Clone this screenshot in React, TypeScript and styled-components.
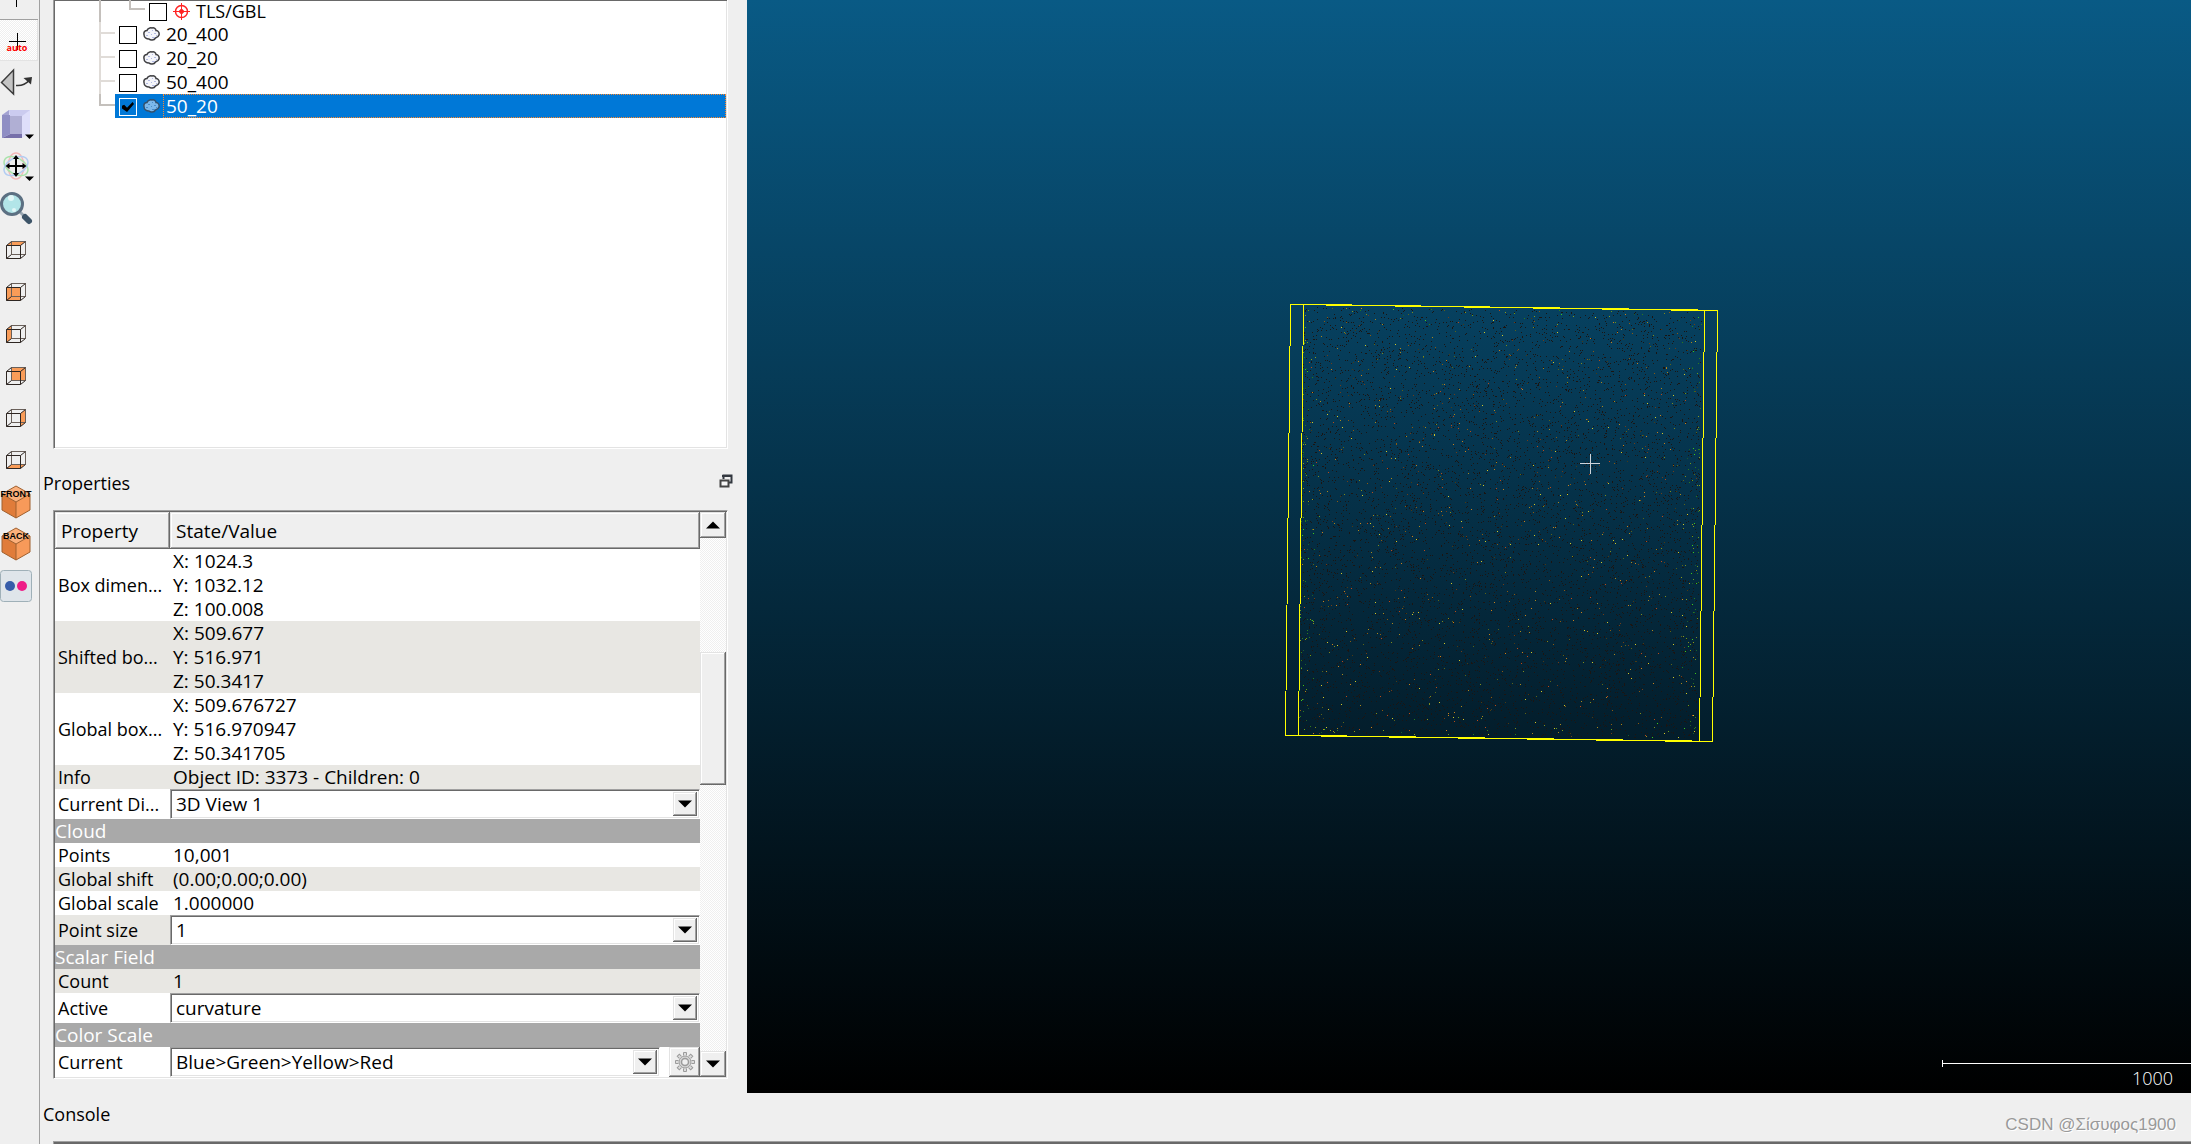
import React from 'react';
import styled, { createGlobalStyle, css } from 'styled-components';

const GlobalStyle = createGlobalStyle`
  *, *::before, *::after { box-sizing: border-box; }
  html, body { margin: 0; height: 100%; }
  body, button, select, input {
    font-family: 'Open Sans', 'Noto Sans', 'Noto Sans CJK SC', sans-serif;
    font-size: 19px;
    line-height: 24px;
    color: #000;
  }
  body { background: #efefef; }
`;

const raised = css`
  background: #efefef;
  box-shadow: inset -1px -1px #696969, inset 1px 1px #e3e3e3,
    inset -2px -2px #a0a0a0, inset 2px 2px #fff;
`;

const sunken = css`
  background: #fff;
  padding: 1px;
  border: 1px solid;
  border-color: #a0a0a0 #fff #fff #a0a0a0;
  box-shadow: inset 1px 1px #696969, inset -1px -1px #e3e3e3;
`;

const checker = css`
  background: conic-gradient(#fff 25%, #efefef 0 50%, #fff 0 75%, #efefef 0) 0 0 / 2px 2px;
`;

const Window = styled.div`
  display: flex;
  height: 100vh;
  overflow: hidden;
  background: #efefef;
`;

/* ---------- left toolbar ---------- */

const Toolbar = styled.nav`
  flex: none;
  width: 40px;
  border-right: 1px solid #a0a0a0;
  overflow: hidden;
`;

const ToolList = styled.div`
  display: flex;
  flex-direction: column;
  margin-top: -23px;
`;

const Tool = styled.button<{ $pressed?: boolean }>`
  flex: none;
  width: 38px;
  height: 42px;
  padding: 0;
  border: 0;
  background: none;
  ${(p) =>
    p.$pressed &&
    css`
      ${checker}
      box-shadow: inset 0 1px #a0a0a0, inset -1px -1px #e3e3e3;
    `}
  svg { display: block; }
`;

const Glyph = ({ children }: { children: React.ReactNode }) => (
  <svg width="38" height="42" viewBox="0 0 38 42" fill="none" aria-hidden="true">
    {children}
  </svg>
);

const Caret = () => <path d="M25 31.500h9l-4.500 4.500z" fill="#000" />;

const faces: Record<string, string> = {
  Top: 'M6.500 16.500L11.500 12.500H25.500L20.500 16.500Z',
  Front: 'M6.500 16.500H20.500V29.500H6.500Z',
  Left: 'M6.500 16.500L11.500 12.500V25.500L6.500 29.500Z',
  Back: 'M11.500 12.500H25.500V25.500H11.500Z',
  Right: 'M20.500 16.500L25.500 12.500V25.500L20.500 29.500Z',
  Bottom: 'M6.500 29.500L11.500 25.500H25.500L20.500 29.500Z',
};

const FaceCube = ({ face }: { face: string }) => (
  <Glyph>
    <path d={faces[face]} fill="#f99c58" />
    <g stroke="#2e2622" strokeWidth="1">
      <path d="M11.500 12.500H25.500V25.500H11.500Z" stroke="#6a605a" />
      <path d="M6.500 16.500H20.500V29.500H6.500Z" />
      <path d="M6.500 16.500l5-4M20.500 16.500l5-4M20.500 29.500l5-4M6.500 29.500l5-4" />
    </g>
  </Glyph>
);

const IsoCube = ({ word }: { word: string }) => (
  <Glyph>
    <path d="M16 5L30 13L16 21L2 13Z" fill="#fbb07c" />
    <path d="M2 13L16 21V37L2 29Z" fill="#e07c3a" />
    <path d="M30 13L16 21V37L30 29Z" fill="#f79a5a" />
    <path d="M16 5L30 13V29L16 37L2 29V13ZM2 13L16 21L30 13M16 21V37" stroke="#a0602e" />
    <text x="16" y="16" textAnchor="middle" fontFamily="'Liberation Sans', sans-serif" fontWeight="700" fontSize="9" fill="#000">
      {word}
    </text>
  </Glyph>
);

const AppToolbar = () => (
  <Toolbar aria-label="Display tools">
    <ToolList>
      <Tool aria-label="Pick rotation center">
        <Glyph><path d="M16.500 14V30M8 21.500H25" stroke="#000" /></Glyph>
      </Tool>
      <Tool aria-label="Auto-pick rotation center" $pressed>
        <Glyph>
          <path d="M17.500 14V31M9 22.500H26" stroke="#000" />
          <text x="17" y="32" textAnchor="middle" fontFamily="'Open Sans', sans-serif" fontWeight="700" fontSize="9" fill="#f00">auto</text>
        </Glyph>
      </Tool>
      <Tool aria-label="Flip">
        <Glyph>
          <path d="M1.500 21.500L13.500 9V33Z" fill="#c4c4c4" stroke="#3c3c3c" strokeWidth="1.500" />
          <path d="M16 24.500C21 25 26 23 29 19.500" stroke="#333" strokeWidth="1.500" />
          <path d="M23.500 17L32 16L31 23.500Z" fill="#333" />
        </Glyph>
      </Tool>
      <Tool aria-label="Set view">
        <Glyph>
          <path d="M2 12L9 7H30V30L22 35H2Z" fill="#dedefa" />
          <path d="M2 12L9 7V31L2 35Z" fill="#a3a2d2" />
          <path d="M9 7H30L22 13H10Z" fill="#cbcbef" />
          <path d="M10 13H22V31H10Z" fill="#b0afd4" />
          <path d="M2 35L10 31H22V35Z" fill="#7770aa" />
          <path d="M2 12H10V31L2 35Z" fill="#8f8ec4" />
          <Caret />
        </Glyph>
      </Tool>
      <Tool aria-label="Set pivot visibility">
        <Glyph>
          <ellipse cx="16" cy="21" rx="8" ry="13" stroke="#f3b9b9" strokeWidth="1.500" />
          <ellipse cx="16" cy="21" rx="8" ry="13" stroke="#a9e3ab" strokeWidth="1.500" transform="rotate(-60 16 21)" />
          <ellipse cx="16" cy="21" rx="8" ry="13" stroke="#b3cdf2" strokeWidth="1.500" transform="rotate(60 16 21)" />
          <path d="M16 13V29M8 21H24" stroke="#000" strokeWidth="2" />
          <path d="M16 10l3 4h-6zM16 32l3-4h-6zM5.500 21l4-3v6zM26.500 21l-4-3v6z" fill="#000" />
          <Caret />
        </Glyph>
      </Tool>
      <Tool aria-label="Zoom">
        <Glyph>
          <path d="M20 25L24 29" stroke="#9aa7b2" strokeWidth="3" />
          <path d="M25 30L29 34" stroke="#3d5468" strokeWidth="6" strokeLinecap="round" />
          <circle cx="12" cy="17" r="10.500" fill="#b2e5e8" stroke="#5c7082" strokeWidth="3" />
          <circle cx="11" cy="11" r="3" fill="#e2f7f7" />
          <circle cx="14" cy="23" r="2" fill="#e2f7f7" />
        </Glyph>
      </Tool>
      {Object.keys(faces).map((face) => (
        <Tool key={face} aria-label={`${face} view`}>
          <FaceCube face={face} />
        </Tool>
      ))}
      <Tool aria-label="Front isometric view"><IsoCube word="FRONT" /></Tool>
      <Tool aria-label="Back isometric view"><IsoCube word="BACK" /></Tool>
      <Tool aria-label="Stereo mode">
        <Glyph>
          <rect x="0.500" y="5.500" width="31" height="31" rx="3" fill="#dfe5ea" stroke="#9fb0b8" />
          <circle cx="10" cy="21" r="5" fill="#365ca9" />
          <circle cx="22" cy="21" r="5" fill="#ee1c87" />
        </Glyph>
      </Tool>
    </ToolList>
  </Toolbar>
);

/* ---------- docks ---------- */

const Main = styled.div`
  flex: 1;
  min-width: 0;
  display: flex;
  flex-direction: column;
`;

const Workspace = styled.div`
  flex: 1;
  min-height: 0;
  display: flex;
`;

const Dock = styled.aside`
  flex: none;
  width: 707px;
  display: flex;
  flex-direction: column;
  padding-bottom: 14px;
`;

const DockTitle = styled.header<{ $top: number }>`
  display: flex;
  justify-content: space-between;
  align-items: flex-start;
  padding: ${(p) => p.$top}px 14px 15px 3px;
  h2 { margin: 0; font-size: 18px; font-weight: 400; line-height: 24px; }
`;

const FloatButton = styled.button`
  display: flex;
  align-items: center;
  height: 20px;
  padding: 0;
  border: 0;
  background: none;
`;

/* ---------- DB tree ---------- */

const TreeBox = styled.div`
  ${sunken}
  flex: 1;
  min-height: 0;
  margin: 0 19px 0 13px;
  border-top: 0;
  padding-top: 0;
`;

const TreeList = styled.ul`
  list-style: none;
  margin: 0;
  padding: 0 0 0 44px;
`;

const TreeRow = styled.li<{ $first?: boolean }>`
  display: flex;
  height: ${(p) => (p.$first ? 22 : 24)}px;
  font-size: ${(p) => (p.$first ? 18 : 19)}px;
  line-height: ${(p) => (p.$first ? 22 : 24)}px;
`;

const Branch = styled.span<{ $last?: boolean; $plain?: boolean; $indent?: boolean }>`
  flex: none;
  width: 16px;
  margin-left: ${(p) => (p.$indent ? 14 : 0)}px;
  border-left: ${(p) => (p.$last ? 0 : 2)}px solid ${(p) => (p.$plain ? '#c4c0bc' : '#e0dcd8')};
  &::before {
    content: '';
    display: block;
    height: ${(p) => (p.$indent ? 10 : 12)}px;
    border-bottom: ${(p) => (p.$plain ? 0 : 2)}px solid ${(p) => (p.$last ? '#c4c0bc' : '#e0dcd8')};
    border-left: ${(p) => (p.$last ? 2 : 0)}px solid #c4c0bc;
  }
`;

const TreeItem = styled.label<{ $selected?: boolean }>`
  flex: 1;
  display: flex;
  align-items: center;
  padding-left: 4px;
  ${(p) => p.$selected && 'background: #0078d7; color: #fff;'}
  svg { flex: none; margin: 0 3px 0 6px; }
`;

const Tick = styled.input`
  appearance: none;
  flex: none;
  width: 18px;
  height: 18px;
  margin: 2px 0 0;
  border: 1px solid #000;
  background: #fff;
  &:checked { border-color: #fff; background: #0078d7; }
  &:checked::before {
    content: '';
    display: block;
    width: 12px;
    height: 12px;
    margin: 2px;
    background: #000;
    clip-path: polygon(0 40%, 18% 32%, 42% 56%, 88% 8%, 100% 24%, 42% 92%, 0 62%);
  }
`;

const ItemText = styled.span<{ $selected?: boolean }>`
  flex: 1;
  padding-left: 3px;
  ${(p) => p.$selected && 'outline: 1px dotted #ff8728; outline-offset: -1px;'}
`;

const CloudIcon = ({ tint }: { tint?: boolean }) => (
  <svg width="17" height="14" viewBox="0 0 17 14" aria-hidden="true">
    <path d="M1 7.500C0.500 5 2 3.500 4 3.500C4.500 1.500 7 0.500 9 1C11 0.500 13 1.500 13 3.500C15.500 3.500 16.500 6 16 8C15.500 10 14 10.500 12.500 11C11 13.500 7.500 13.500 6 12C3.500 12 1 10.500 1 7.500Z" fill={tint ? '#7db8ea' : '#f4f5fa'} stroke={tint ? '#34506c' : '#3f3f42'} strokeWidth="1.500" />
    <path d="M5 5.500h2M9 3.500h1M8 7.500h1M11 6.500h2M3 8.500h2M9 10.500h3M13 8.500h1" stroke={tint ? '#4a8cc8' : '#b3bae2'} />
  </svg>
);

const TargetIcon = () => (
  <svg width="17" height="17" viewBox="0 0 17 17" fill="none" stroke="#f22" aria-hidden="true">
    <circle cx="8.500" cy="8.500" r="6" strokeWidth="1.500" />
    <path d="M8.500 0V17M0 8.500H17" />
    <circle cx="8.500" cy="8.500" r="2" fill="#f22" />
  </svg>
);

const clouds = [
  { name: '20_400', on: false },
  { name: '20_20', on: false },
  { name: '50_400', on: false },
  { name: '50_20', on: true },
];

const DbTree = () => (
  <TreeBox>
    <TreeList>
      <TreeRow $first>
        <Branch $plain />
        <Branch $last $indent />
        <TreeItem>
          <Tick type="checkbox" />
          <TargetIcon />
          <ItemText>TLS/GBL</ItemText>
        </TreeItem>
      </TreeRow>
      {clouds.map((c) => (
        <TreeRow key={c.name}>
          <Branch $last={c.on} />
          <TreeItem $selected={c.on}>
            <Tick type="checkbox" defaultChecked={c.on} />
            <CloudIcon tint={c.on} />
            <ItemText $selected={c.on}>{c.name}</ItemText>
          </TreeItem>
        </TreeRow>
      ))}
    </TreeList>
  </TreeBox>
);

/* ---------- properties ---------- */

const PropertyBox = styled.div`
  ${sunken}
  display: flex;
  margin: 0 19px 0 13px;
`;

const PropertyTable = styled.table`
  flex: 1;
  min-width: 0;
  border-collapse: collapse;
  table-layout: fixed;
  white-space: nowrap;
  col:first-child { width: 115px; }
`;

const HeadCell = styled.th`
  ${raised}
  height: 37px;
  padding: 0 6px;
  text-align: left;
  font-weight: 400;
`;

const Name = styled.th<{ $alt?: boolean }>`
  padding: 0 0 0 3px;
  overflow: hidden;
  text-align: left;
  font-size: 18px;
  font-weight: 400;
  background: ${(p) => (p.$alt ? '#e8e7e3' : '#fff')};
`;

const Value = styled.td<{ $alt?: boolean; $control?: boolean }>`
  height: ${(p) => (p.$control ? 30 : 24)}px;
  padding: 0 0 0 ${(p) => (p.$control ? 0 : 3)}px;
  background: ${(p) => (p.$alt ? '#e8e7e3' : '#fff')};
`;

const Section = styled.th`
  height: 24px;
  padding: 0;
  text-align: left;
  font-weight: 400;
  color: #fff;
  background: #a9a9a9;
`;

const ControlLine = styled.div`
  display: flex;
  justify-content: space-between;
  gap: 9px;
  height: 30px;
`;

const Combo = styled.div`
  ${sunken}
  flex: 1;
  display: flex;
  align-items: center;
`;

const ComboSelect = styled.select`
  appearance: none;
  flex: 1;
  min-width: 0;
  height: 26px;
  padding: 0 4px;
  border: 0;
  background: none;
  outline: 0;
`;

const ArrowBox = styled.span`
  ${raised}
  flex: none;
  display: grid;
  place-items: center;
  width: 24px;
  height: 24px;
  margin-right: 1px;
  pointer-events: none;
`;

const GearButton = styled.button`
  ${raised}
  flex: none;
  display: grid;
  place-items: center;
  width: 31px;
  height: 30px;
  padding: 0;
  border: 0;
`;

const Arrow = ({ up }: { up?: boolean }) => (
  <svg width="14" height="8" viewBox="0 0 14 8" aria-hidden="true">
    <path d={up ? 'M0 7.500L7 0.500L14 7.500Z' : 'M0 0.500H14L7 7.500Z'} fill="#000" />
  </svg>
);

const GearIcon = () => (
  <svg width="22" height="22" viewBox="0 0 22 22" fill="none" stroke="#9b9b9b" aria-hidden="true">
    {[0, 45, 90, 135, 180, 225, 270, 315].map((a) => (
      <path key={a} d="M9.500 4.500V1.500H12.500V4.500" fill="#dcdcdc" transform={`rotate(${a} 11 11)`} />
    ))}
    <circle cx="11" cy="11" r="6" fill="#d6d6d6" />
    <circle cx="11" cy="11" r="3.500" fill="#efefef" strokeWidth="1.500" />
  </svg>
);

const ScrollBar = styled.div`
  ${checker}
  flex: none;
  display: flex;
  flex-direction: column;
  width: 26px;
`;

const ScrollButton = styled.button`
  ${raised}
  flex: none;
  display: grid;
  place-items: center;
  height: 26px;
  padding: 0;
  border: 0;
`;

const Thumb = styled.div`
  ${raised}
  flex: 133;
`;

const Track = styled.div<{ $share: number }>`
  flex: ${(p) => p.$share};
`;

type Row =
  | { kind: 'section'; name: string }
  | { kind: 'text'; name: string; lines: string[]; alt?: boolean }
  | { kind: 'combo'; name: string; value: string; alt?: boolean; gear?: boolean };

const rows: Row[] = [
  { kind: 'text', name: 'Box dimen...', lines: ['X: 1024.3', 'Y: 1032.12', 'Z: 100.008'] },
  { kind: 'text', name: 'Shifted bo...', lines: ['X: 509.677', 'Y: 516.971', 'Z: 50.3417'], alt: true },
  { kind: 'text', name: 'Global box...', lines: ['X: 509.676727', 'Y: 516.970947', 'Z: 50.341705'] },
  { kind: 'text', name: 'Info', lines: ['Object ID: 3373 - Children: 0'], alt: true },
  { kind: 'combo', name: 'Current Di...', value: '3D View 1' },
  { kind: 'section', name: 'Cloud' },
  { kind: 'text', name: 'Points', lines: ['10,001'] },
  { kind: 'text', name: 'Global shift', lines: ['(0.00;0.00;0.00)'], alt: true },
  { kind: 'text', name: 'Global scale', lines: ['1.000000'] },
  { kind: 'combo', name: 'Point size', value: '1', alt: true },
  { kind: 'section', name: 'Scalar Field' },
  { kind: 'text', name: 'Count', lines: ['1'], alt: true },
  { kind: 'combo', name: 'Active', value: 'curvature' },
  { kind: 'section', name: 'Color Scale' },
  { kind: 'combo', name: 'Current', value: 'Blue>Green>Yellow>Red', gear: true },
];

const PropertyRow = ({ row, id }: { row: Row; id: string }) => {
  if (row.kind === 'section') {
    return <tr><Section colSpan={2} scope="colgroup">{row.name}</Section></tr>;
  }
  if (row.kind === 'text') {
    return (
      <tr>
        <Name scope="row" $alt={row.alt}>{row.name}</Name>
        <Value $alt={row.alt}>
          {row.lines.map((line) => <div key={line}>{line}</div>)}
        </Value>
      </tr>
    );
  }
  return (
    <tr>
      <Name scope="row" $alt={row.alt}><label htmlFor={id}>{row.name}</label></Name>
      <Value $control>
        <ControlLine>
          <Combo>
            <ComboSelect id={id} defaultValue={row.value}>
              <option>{row.value}</option>
            </ComboSelect>
            <ArrowBox><Arrow /></ArrowBox>
          </Combo>
          {row.gear && <GearButton aria-label="Edit color scale"><GearIcon /></GearButton>}
        </ControlLine>
      </Value>
    </tr>
  );
};

const Properties = () => (
  <>
    <DockTitle $top={22}>
      <h2>Properties</h2>
      <FloatButton aria-label="Float panel">
        <svg width="14" height="14" viewBox="0 0 14 14" fill="none" aria-hidden="true">
          <path d="M4.500 5V1.500H12.500V8.500H10" stroke="#333840" strokeWidth="2" />
          <path d="M3 1H13V3H3Z" fill="#333840" />
          <path d="M1.500 6.500H9.500V12.500H1.500Z" fill="#f6f6f6" stroke="#444" strokeWidth="2" />
        </svg>
      </FloatButton>
    </DockTitle>
    <PropertyBox>
      <PropertyTable>
        <colgroup><col /><col /></colgroup>
        <thead>
          <tr>
            <HeadCell scope="col">Property</HeadCell>
            <HeadCell scope="col">State/Value</HeadCell>
          </tr>
        </thead>
        <tbody>
          {rows.map((row, i) => <PropertyRow key={i} row={row} id={`prop-${i}`} />)}
        </tbody>
      </PropertyTable>
      <ScrollBar>
        <ScrollButton aria-label="Scroll up"><Arrow up /></ScrollButton>
        <Track $share={114} />
        <Thumb />
        <Track $share={267} />
        <ScrollButton aria-label="Scroll down"><Arrow /></ScrollButton>
      </ScrollBar>
    </PropertyBox>
  </>
);

/* ---------- 3D view ---------- */

const View = styled.main`
  flex: 1;
  min-width: 0;
  position: relative;
  display: flex;
  flex-direction: column;
  justify-content: flex-end;
  align-items: flex-end;
  overflow: hidden;
  background: linear-gradient(#095a85, #000);
`;

const Scene = styled.svg`
  position: absolute;
  left: 538px;
  top: 303px;
`;

const ScaleBar = styled.div`
  width: 249px;
  height: 7px;
  border-left: 1px solid #fff;
  background: linear-gradient(#fff, #fff) 0 3px / 100% 1px no-repeat;
`;

const ScaleText = styled.span`
  padding: 0 18px 3px 0;
  font-size: 18px;
  font-weight: 300;
  line-height: 23px;
  color: #fff;
`;

/* Sample the surface with a fixed seed and group the samples by colour. */
const makePoints = () => {
  let seed = 20501;
  const rnd = () => {
    seed = (seed * 1664525 + 1013904223) % 4294967296;
    return seed / 4294967296;
  };
  const warm = ['#8a5a10', '#a8861c', '#6f3d18', '#c8801a', '#7d8a1c', '#b84a18', '#4a3a14', '#d0c828', '#5a6418'];
  const edge = ['#2c7a1c', '#1d5c2c', '#6a9a1a', '#3cc81c', '#8a9a1c'];
  const out: Record<string, string> = {};
  const put = (colour: string, u: number, v: number) => {
    const x = Math.round(18 + u * 398 - v * 5);
    const y = Math.round(4 + v * 426 + u * 5);
    out[colour] = `${out[colour] || ''}M${x} ${y}h1v1h-1z`;
  };
  for (let i = 0; i < 7400; i++) put('#1a1513', rnd(), rnd());
  for (let i = 0; i < 960; i++) put(warm[Math.floor(rnd() * warm.length)], rnd(), rnd());
  for (let i = 0; i < 250; i++) {
    const near = rnd() * rnd() * 0.05;
    const side = rnd();
    const along = rnd();
    const colour = edge[Math.floor(rnd() * edge.length)];
    if (side < 0.4) put(colour, near, along);
    else if (side < 0.8) put(colour, 1 - near, along);
    else put(colour, along, side < 0.87 ? near : 1 - near);
  }
  return Object.entries(out);
};

const points = makePoints();

const View3D = () => (
  <View>
    <Scene width="434" height="440" viewBox="0 0 434 440" shapeRendering="crispEdges" role="img" aria-label="Point cloud 50_20">
      {points.map(([colour, d]) => <path key={colour} d={d} fill={colour} />)}
      <g stroke="#ff0" fill="none">
        <path d="M5.500 1.500L419.500 7.500L414.500 438.500L0.500 432.500Z" />
        <path d="M18.500 1.300L432.500 7.300L427.500 438.300L13.500 432.300Z" />
      </g>
      <path d="M295 160.500H315M305.500 151V171" stroke="#cdd3da" />
    </Scene>
    <ScaleBar />
    <ScaleText>1000</ScaleText>
  </View>
);

/* ---------- console ---------- */

const ConsoleDock = styled.section`
  flex: none;
  position: relative;
`;

const ConsoleBox = styled.div`
  height: 3px;
  margin-left: 13px;
  border: solid #a0a0a0;
  border-width: 1px 0 0 1px;
  background: #696969;
`;

const Watermark = styled.span`
  position: absolute;
  right: 15px;
  bottom: 7px;
  font-family: 'Liberation Sans', sans-serif;
  font-size: 17px;
  line-height: 24px;
  color: #999;
  text-shadow: 1px 1px #fff;
`;

export default function App() {
  return (
    <Window>
      <GlobalStyle />
      <AppToolbar />
      <Main>
        <Workspace>
          <Dock>
            <DbTree />
            <Properties />
          </Dock>
          <View3D />
        </Workspace>
        <ConsoleDock>
          <DockTitle $top={9}><h2>Console</h2></DockTitle>
          <ConsoleBox />
          <Watermark>CSDN @Σίσυφος1900</Watermark>
        </ConsoleDock>
      </Main>
    </Window>
  );
}
